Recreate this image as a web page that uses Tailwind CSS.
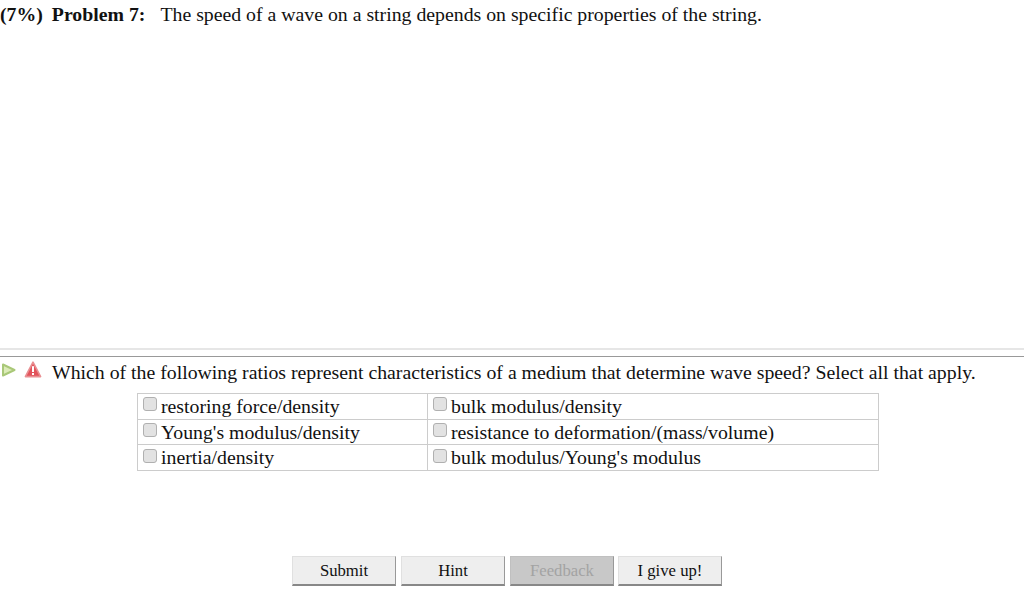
<!DOCTYPE html>
<html>
<head>
<meta charset="utf-8">
<script src="https://cdn.jsdelivr.net/npm/@tailwindcss/browser@4"></script>
</head>
<body class="bg-white">
<div class="w-[1024px] h-[589px] overflow-hidden flex flex-col font-['Liberation_Serif',serif] text-[#111] text-[19.8px] leading-[22px]">
  <div class="h-[348px] flex items-start pt-[3px]">
    <span class="font-bold">(7%)</span>
    <span class="font-bold ml-[9px]">Problem 7:</span>
    <span class="ml-[15px]">The speed of a wave on a string depends on specific properties of the string.</span>
  </div>
  <div class="h-[2px] bg-[#e6e6e6]"></div>
  <div class="h-[6px]"></div>
  <div class="h-[1px] bg-[#999]"></div>
  <div class="h-[36px] flex items-start relative pt-[4px]">
    <svg class="ml-[1px] mt-[1px]" width="16" height="16" viewBox="0 0 16 16"><path d="M2 2.5 L13.5 8 L2 13.5 Z" fill="#dcebb8" stroke="#a9c878" stroke-width="2" stroke-linejoin="round"/></svg>
    <svg class="ml-[7px]" width="18" height="18" viewBox="0 0 18 18"><path d="M9 1.2 L16.6 15.6 L1.4 15.6 Z" fill="#e2535b" stroke="#e98f92" stroke-width="1.6" stroke-linejoin="round"/><rect x="8" y="5.2" width="2" height="5.8" fill="#fff"/><rect x="8" y="12" width="2" height="2" fill="#fff"/></svg>
    <span class="ml-[10px]">Which of the following ratios represent characteristics of a medium that determine wave speed? Select all that apply.</span>
  </div>
  <div class="h-[163px] pl-[137px]">
    <div class="w-[742px] border border-[#ccc] grid grid-cols-[290px_1fr]">
      <div class="h-[26px] flex items-start pl-[5px] border-r border-b border-[#ccc]"><span class="w-[14px] h-[14px] mt-[3px] rounded-[3px] border border-[#b0b0b0] bg-[#e2e2e2]"></span><span class="ml-[4px] mt-[1px]">restoring force/density</span></div>
      <div class="h-[26px] flex items-start pl-[5px] border-b border-[#ccc]"><span class="w-[14px] h-[14px] mt-[3px] rounded-[3px] border border-[#b0b0b0] bg-[#e2e2e2]"></span><span class="ml-[4px] mt-[1px]">bulk modulus/density</span></div>
      <div class="h-[25px] flex items-start pl-[5px] border-r border-b border-[#ccc]"><span class="w-[14px] h-[14px] mt-[3px] rounded-[3px] border border-[#b0b0b0] bg-[#e2e2e2]"></span><span class="ml-[4px] mt-[1px]">Young's modulus/density</span></div>
      <div class="h-[25px] flex items-start pl-[5px] border-b border-[#ccc]"><span class="w-[14px] h-[14px] mt-[3px] rounded-[3px] border border-[#b0b0b0] bg-[#e2e2e2]"></span><span class="ml-[4px] mt-[1px]">resistance to deformation/(mass/volume)</span></div>
      <div class="h-[25px] flex items-start pl-[5px] border-r border-[#ccc]"><span class="w-[14px] h-[14px] mt-[4px] rounded-[3px] border border-[#b0b0b0] bg-[#e2e2e2]"></span><span class="ml-[4px] mt-[1px]">inertia/density</span></div>
      <div class="h-[25px] flex items-start pl-[5px]"><span class="w-[14px] h-[14px] mt-[4px] rounded-[3px] border border-[#b0b0b0] bg-[#e2e2e2]"></span><span class="ml-[4px] mt-[1px]">bulk modulus/Young's modulus</span></div>
    </div>
  </div>
  <div class="flex pl-[292px] text-[16.7px]">
    <button class="w-[104px] h-[30px] bg-[#eee] border border-[#e0e0e0] border-r-[#999] border-b-[#888] border-b-2 text-[#111]">Submit</button>
    <button class="ml-[5px] w-[104px] h-[30px] bg-[#eee] border border-[#e0e0e0] border-r-[#999] border-b-[#888] border-b-2 text-[#111]">Hint</button>
    <button class="ml-[5px] w-[104px] h-[30px] bg-[#c8c8c8] border border-[#c0c0c0] border-r-[#999] border-b-[#888] border-b-2 text-[#a3a3a3]">Feedback</button>
    <button class="ml-[4px] w-[104px] h-[30px] bg-[#eee] border border-[#e0e0e0] border-r-[#999] border-b-[#888] border-b-2 text-[#111]">I give up!</button>
  </div>
</div>
</body>
</html>
